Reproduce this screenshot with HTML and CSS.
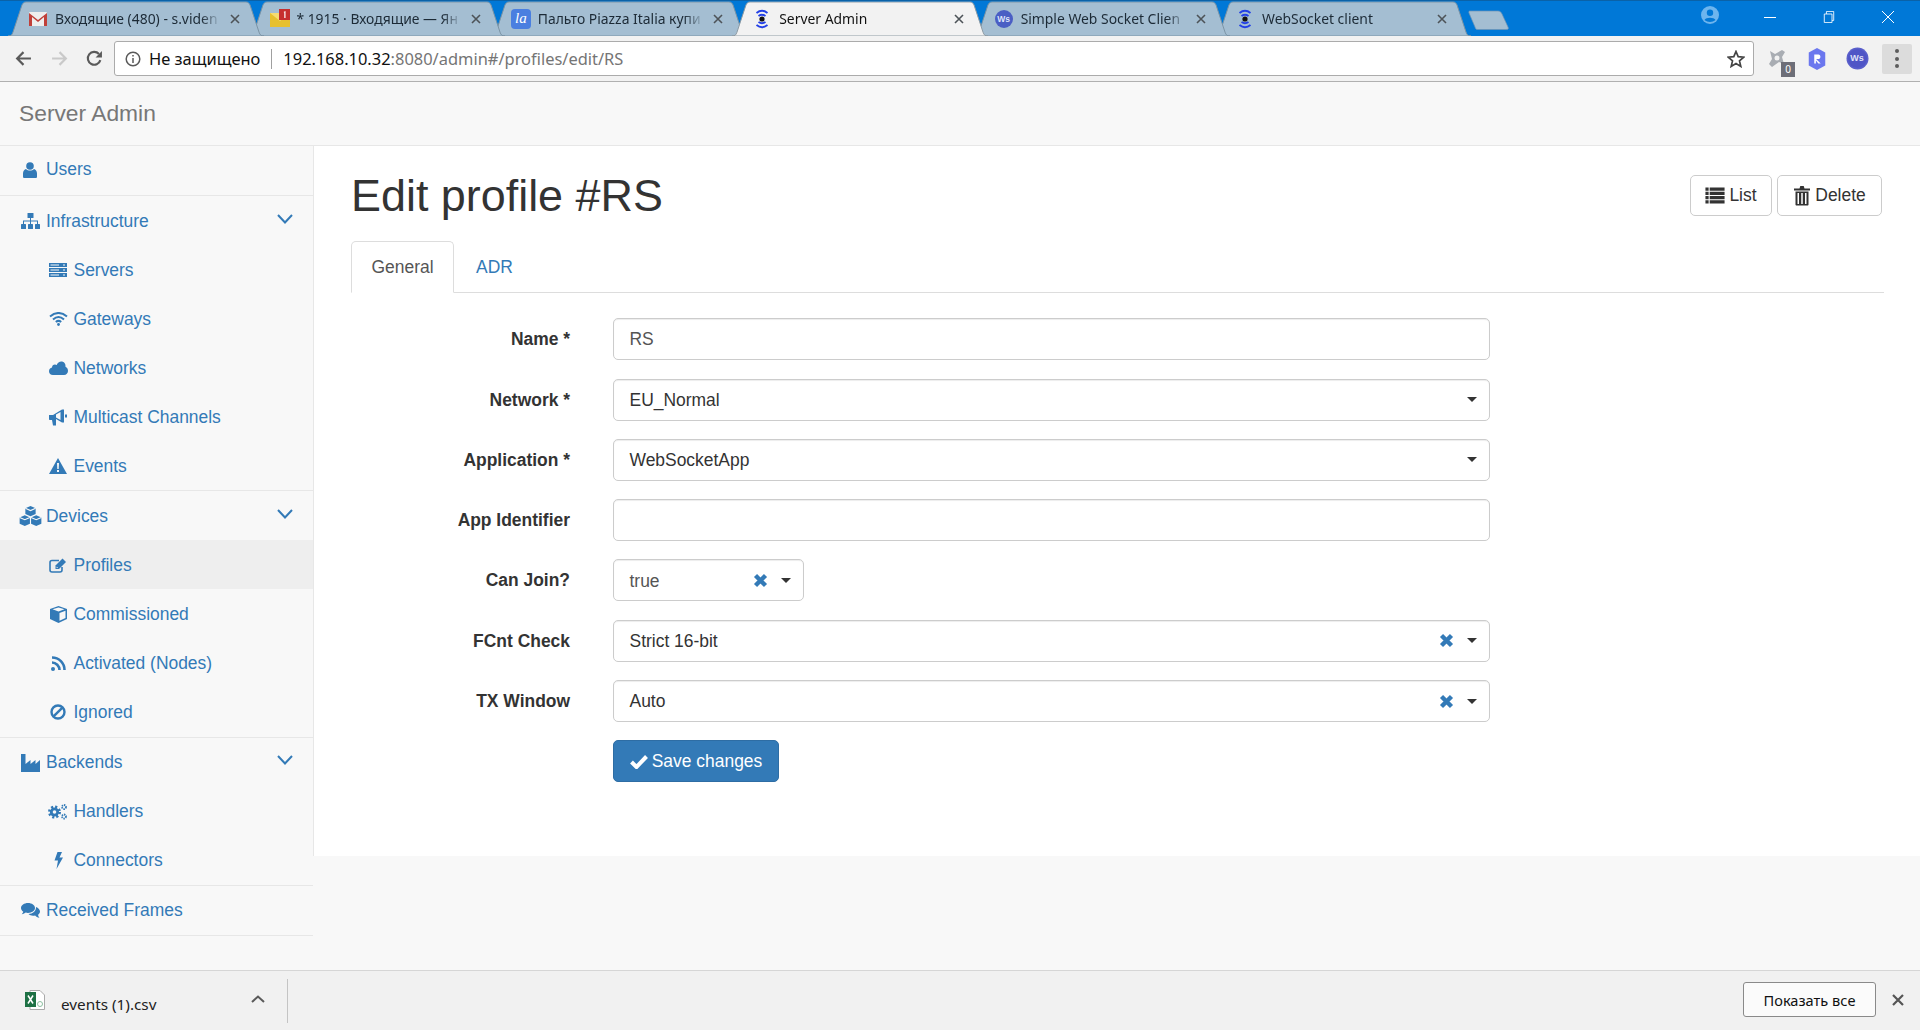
FILE: index.html
```html
<!DOCTYPE html>
<html lang="ru">
<head>
<meta charset="utf-8">
<title>Server Admin</title>
<link rel="stylesheet" href="styles.css">
</head>
<body>
<div class="tabstrip">
  <div class="tab">
    <svg class="tab-shape" viewBox="0 0 256 36" preserveAspectRatio="none"><path d="M0 36C3 36 4 35 5 32L14 4C15 2 16 1 18 1H238C240 1 241 2 242 4L251 32C252 35 253 36 256 36Z"/></svg>
    <svg class="favicon" viewBox="0 0 18 14"><rect width="18" height="14" rx="1" fill="#eee"/><path d="M0 14V1L9 8 18 1V14H15V5L9 10 3 5V14Z" fill="#c0403a"/></svg>
    <span class="tab-title">Входящие (480) - s.viden</span>
    <svg class="tab-close" viewBox="0 0 10 10"><path d="M1 1L9 9M9 1L1 9"/></svg>
  </div>
  <div class="tab">
    <svg class="tab-shape" viewBox="0 0 256 36" preserveAspectRatio="none"><path d="M0 36C3 36 4 35 5 32L14 4C15 2 16 1 18 1H238C240 1 241 2 242 4L251 32C252 35 253 36 256 36Z"/></svg>
    <svg class="favicon favicon-ya" viewBox="0 0 20 18"><path d="M0 4H20V18H0Z" fill="#e6c02f"/><path d="M0 4L10 12 20 4" fill="#f5dc72"/><rect x="9" width="11" height="11" fill="#c62f2f"/><path d="M13.500 3L15.500 2V9H14.300V3.600Z" fill="#fff"/></svg>
    <span class="tab-title">* 1915 · Входящие — Ян</span>
    <svg class="tab-close" viewBox="0 0 10 10"><path d="M1 1L9 9M9 1L1 9"/></svg>
  </div>
  <div class="tab">
    <svg class="tab-shape" viewBox="0 0 256 36" preserveAspectRatio="none"><path d="M0 36C3 36 4 35 5 32L14 4C15 2 16 1 18 1H238C240 1 241 2 242 4L251 32C252 35 253 36 256 36Z"/></svg>
    <span class="favicon-la">la</span>
    <span class="tab-title">Пальто Piazza Italia купи</span>
    <svg class="tab-close" viewBox="0 0 10 10"><path d="M1 1L9 9M9 1L1 9"/></svg>
  </div>
  <div class="tab tab-active">
    <svg class="tab-shape" viewBox="0 0 256 36" preserveAspectRatio="none"><path d="M0 36C3 36 4 35 5 32L14 4C15 2 16 1 18 1H238C240 1 241 2 242 4L251 32C252 35 253 36 256 36Z"/></svg>
    <svg class="favicon favicon-air" viewBox="0 0 16 20"><path d="M2.500 4Q8 -.5 13.500 4M4.500 7Q8 4.500 11.500 7M2.500 16Q8 20.500 13.500 16M4.500 13Q8 15.500 11.500 13"/><circle cx="8" cy="10" r="2.600"/></svg>
    <span class="tab-title">Server Admin</span>
    <svg class="tab-close" viewBox="0 0 10 10"><path d="M1 1L9 9M9 1L1 9"/></svg>
  </div>
  <div class="tab">
    <svg class="tab-shape" viewBox="0 0 256 36" preserveAspectRatio="none"><path d="M0 36C3 36 4 35 5 32L14 4C15 2 16 1 18 1H238C240 1 241 2 242 4L251 32C252 35 253 36 256 36Z"/></svg>
    <span class="favicon-ws">Ws</span>
    <span class="tab-title">Simple Web Socket Clien</span>
    <svg class="tab-close" viewBox="0 0 10 10"><path d="M1 1L9 9M9 1L1 9"/></svg>
  </div>
  <div class="tab">
    <svg class="tab-shape" viewBox="0 0 256 36" preserveAspectRatio="none"><path d="M0 36C3 36 4 35 5 32L14 4C15 2 16 1 18 1H238C240 1 241 2 242 4L251 32C252 35 253 36 256 36Z"/></svg>
    <svg class="favicon favicon-air" viewBox="0 0 16 20"><path d="M2.500 4Q8 -.5 13.500 4M4.500 7Q8 4.500 11.500 7M2.500 16Q8 20.500 13.500 16M4.500 13Q8 15.500 11.500 13"/><circle cx="8" cy="10" r="2.600"/></svg>
    <span class="tab-title">WebSocket client</span>
    <svg class="tab-close" viewBox="0 0 10 10"><path d="M1 1L9 9M9 1L1 9"/></svg>
  </div>
  <svg class="newtab" viewBox="0 0 42 20"><path d="M2 1H30C32 1 33 2 34 4L40 17C41 19 40 19.500 38 19.500H10C8 19.500 7.500 19 7 17L1 3C.5 1.500 1 1 2 1Z"/></svg>
  <div class="winctl">
    <svg class="avatar" viewBox="0 0 18 18"><circle cx="9" cy="9" r="9" fill="#6db5ee"/><circle cx="9" cy="6.800" r="3.200" fill="#0078d7"/><path d="M3.500 14C5 11 13 11 14.500 14 11.500 16.500 6.500 16.500 3.500 14Z" fill="#0078d7"/></svg>
    <svg class="winbtn" viewBox="0 0 12 12"><path d="M0 6.500H12"/></svg>
    <svg class="winbtn" viewBox="0 0 12 14"><path d="M.5 3.500H9.500V13.500H.5ZM3 3.500V.5H11.500V11H9.500"/></svg>
    <svg class="winbtn" viewBox="0 0 12 12"><path d="M0 0L12 12M12 0L0 12"/></svg>
  </div>
</div>

<div class="toolbar">
  <button class="navbtn"><svg viewBox="0 0 16 16"><path d="M15 8H2M8 2L2 8 8 14"/></svg></button>
  <button class="navbtn navbtn-off"><svg viewBox="0 0 16 16"><path d="M1 8H14M8 2L14 8 8 14"/></svg></button>
  <button class="navbtn navbtn-reload"><svg viewBox="0 0 16 16"><path d="M13.500 9.500A6 6 0 1 1 12.200 3.800"/><path class="solid" d="M15 1V7H9Z"/></svg></button>
  <div class="omnibox">
    <svg class="omni-info" viewBox="0 0 16 16"><circle cx="8" cy="8" r="6.800"/><path d="M8 7V12M8 4V5.600"/></svg>
    <span class="omni-secure">Не защищено</span>
    <span class="omni-sep"></span>
    <span class="omni-url">192.168.10.32<span class="omni-path">:8080/admin#/profiles/edit/RS</span></span>
    <svg class="omni-star" viewBox="0 0 18 18"><path d="M9 1.500L11.200 6.700 16.800 7.200 12.500 10.900 13.800 16.400 9 13.500 4.200 16.400 5.500 10.900 1.200 7.200 6.800 6.700Z"/></svg>
  </div>
  <div class="ext ext-first">
    <svg viewBox="0 0 20 20"><path d="M3 2L8 5 15 1 18 3 15 8 17 15 12 13 5 18 2 15 5 10Z" fill="#a9adb3"/><circle cx="10" cy="9" r="2.500" fill="#f2f2f2"/></svg>
    <span class="ext-badge">0</span>
  </div>
  <div class="ext">
    <svg viewBox="0 0 20 24"><path d="M10 0L19 5V19L10 24 1 19V5Z" fill="#6b77ee"/><path d="M7 7H11.500C14.500 7 14.500 12 11.500 12H9L14 17H11.500L8.800 13.500V17H7Z" fill="#fff"/></svg>
  </div>
  <div class="ext">
    <span class="ext-ws">Ws</span>
  </div>
  <div class="menu-btn"><i></i><i></i><i></i></div>
</div>

<header class="navbar"><a class="brand">Server Admin</a></header>

<div class="app">
  <nav class="sidebar">
    <a class="item group-end first"><span class="ic"><svg width="14" height="16" viewBox="0 0 14 16"><circle cx="7" cy="4" r="3.800"/><path d="M0 14.500V11.500C0 9 1.500 7.300 3 7 4 8 5.500 8.500 7 8.500S10 8 11 7C12.500 7.300 14 9 14 11.500V14.500C14 15.500 13.500 16 12.500 16H1.500C.5 16 0 15.500 0 14.500Z"/></svg></span>Users</a>

    <a class="item"><span class="ic"><svg width="19" height="16" viewBox="0 0 19 16"><rect x="6.500" width="6" height="5" rx=".5"/><rect y="11" width="5" height="5" rx=".5"/><rect x="7" y="11" width="5" height="5" rx=".5"/><rect x="14" y="11" width="5" height="5" rx=".5"/><path d="M9 5H10V7.500H17V11H16V8.500H10V11H9V8.500H3V11H2V7.500H9Z"/></svg></span>Infrastructure<svg class="chev" viewBox="0 0 16 10"><path d="M1 1L8 8.500 15 1"/></svg></a>
    <a class="item sub"><span class="ic"><svg width="18" height="14" viewBox="0 0 18 14"><path d="M0 0H18V4H0ZM0 5H18V9H0ZM0 10H18V14H0Z"/><path class="hole" d="M1.500 1.500H10V2.500H1.500ZM1.500 6.500H10V7.500H1.500ZM1.500 11.500H10V12.500H1.500ZM14 1.500H16V2.500H14ZM14 6.500H16V7.500H14ZM14 11.500H16V12.500H14Z"/></svg></span>Servers</a>
    <a class="item sub"><span class="ic"><svg class="line2" width="19" height="14" viewBox="0 0 19 14"><path d="M1 4.500Q9.500 -2.500 18 4.500M4 7.500Q9.500 2.500 15 7.500M6.800 10Q9.500 7.800 12.200 10"/><circle class="solid" cx="9.500" cy="12.500" r="1.400"/></svg></span>Gateways</a>
    <a class="item sub"><span class="ic"><svg width="19" height="14" viewBox="0 0 19 14"><path d="M4 14C1.500 14 0 12.300 0 10.200 0 8.200 1.300 6.800 3 6.500 3 4.800 4.300 3.500 6 3.500 6.600 3.500 7.200 3.700 7.700 4 8.500 1.800 10.300 .5 12.300 .5 15 .5 16.800 2.600 16.500 5.800 18 6.500 19 8 19 10 19 12.300 17.300 14 15 14Z"/></svg></span>Networks</a>
    <a class="item sub"><span class="ic"><svg width="18" height="17" viewBox="0 0 18 17"><path d="M0 6H4L13 0.500H15V13.500H13L7 10V16.500H4L3 11H1C.3 11 0 10.500 0 10Z"/><path class="hole" d="M11.500 3V11L7 8.500V5.500Z"/><rect x="16" y="5.500" width="2" height="3"/></svg></span>Multicast Channels</a>
    <a class="item sub group-end"><span class="ic"><svg width="18" height="16" viewBox="0 0 18 16"><path d="M9 0L18 16H0Z"/><path class="hole" d="M8 5H10L9.700 11H8.300ZM8 12H10V14H8Z"/></svg></span>Events</a>

    <a class="item"><span class="ic"><svg width="23" height="20" viewBox="1.500 0 20 17.500"><path d="M11.500 0L16 2V7L11.500 9 7 7V2Z"/><path d="M6.500 8L11 10V15.500L6.500 17.500 2 15.500V10ZM16.500 8L21 10V15.500L16.500 17.500 12 15.500V10Z"/><path class="hole-line" d="M7 2L11.500 4 16 2M2 10L6.500 12 11 10M12 10L16.500 12 21 10"/></svg></span>Devices<svg class="chev" viewBox="0 0 16 10"><path d="M1 1L8 8.500 15 1"/></svg></a>
    <a class="item sub active"><span class="ic"><svg width="18" height="15" viewBox="0 0 18 15"><path class="stroke" d="M10 2.500H3C1.800 2.500 1 3.300 1 4.500V12C1 13.200 1.800 14 3 14H11C12.200 14 13 13.200 13 12V9"/><path d="M6.500 7.500L13.500 .5 17 4 10 11H6.500Z"/><path class="hole" d="M7.800 8.500L9 9.700 8.300 10H7.500Z"/></svg></span>Profiles</a>
    <a class="item sub"><span class="ic"><svg width="17" height="17" viewBox="0 0 17 17"><path d="M8.500 0L17 3V13L8.500 17 0 13V3Z"/><path class="hole" d="M9.500 7L15.500 4.800V12L9.500 14.800ZM2.500 3.300L8.500 1.500 14.500 3.300 8.500 5.500Z"/></svg></span>Commissioned</a>
    <a class="item sub"><span class="ic"><svg class="line2" width="15" height="15" viewBox="0 0 15 15"><path d="M1 6.500C5 6.500 8.500 10 8.500 14M1 1.500C8 1.500 13.500 7 13.500 14" stroke-width="2.600"/><circle class="solid" cx="2" cy="13" r="2"/></svg></span>Activated (Nodes)</a>
    <a class="item sub group-end tall"><span class="ic"><svg class="line2" width="16" height="16" viewBox="0 0 16 16"><circle cx="8" cy="8" r="6.500" stroke-width="2.400"/><path d="M3.800 12.200L12.200 3.800" stroke-width="2.400"/></svg></span>Ignored</a>

    <a class="item"><span class="ic"><svg width="19" height="18" viewBox="0 0 19 18"><path d="M0 0H4.500V10L9.500 6V10L14.500 6V10L19 6V18H0Z"/></svg></span>Backends<svg class="chev" viewBox="0 0 16 10"><path d="M1 1L8 8.500 15 1"/></svg></a>
    <a class="item sub"><span class="ic"><svg class="cogs" width="20" height="17" viewBox="0 0 20 17"><circle class="cog-t" cx="6.500" cy="9" r="5" /><circle class="solid" cx="6.500" cy="9" r="4.600"/><circle class="hole" cx="6.500" cy="9" r="1.800"/><circle class="cog-s" cx="16" cy="4" r="2"/><circle class="cog-s" cx="16" cy="13.500" r="2"/></svg></span>Handlers</a>
    <a class="item sub group-end"><span class="ic"><svg width="9" height="17" viewBox="0 0 9 17"><path d="M3.500 0H8L5.500 5.500H9L2.500 17 4 8.500H.5Z"/></svg></span>Connectors</a>

    <a class="item group-end"><span class="ic"><svg width="19" height="15" viewBox="0 0 19 15"><path d="M7 0C3.200 0 0 2.200 0 5 0 6.500 .9 7.800 2.300 8.700 2 9.700 1.500 10.500 .8 11.200 2.500 11 3.800 10.400 4.700 9.600 5.400 9.800 6.200 9.900 7 9.900 10.900 9.900 14 7.700 14 5S10.900 0 7 0Z"/><path d="M15 4C15.300 8 11.700 10.800 7.500 11 8.600 12.200 10.300 12.700 12 12.700 12.700 12.700 13.400 12.600 14.100 12.400 15 13.300 16.500 14.500 18.500 14.700 17.700 14 17.200 13 17 11.800 18.200 11 19 9.800 19 8.500 19 6.700 17.400 5 15 4Z"/></svg></span>Received Frames</a>
  </nav>

  <main class="main">
    <div class="page-head">
      <h1>Edit profile #RS</h1>
      <div class="head-btns">
        <a class="btn btn-list"><svg class="btn-ic" width="20" height="17" viewBox="0 0 18 16"><path d="M0 .5H3V3.500H0ZM0 4.500H3V7.500H0ZM0 8.500H3V11.500H0ZM0 12.500H3V15.500H0Z"/><path d="M4 .5H18V3.500H4ZM4 4.500H18V7.500H4ZM4 8.500H18V11.500H4ZM4 12.500H18V15.500H4Z"/></svg> List</a>
        <a class="btn btn-del"><svg class="btn-ic" width="16" height="21" viewBox="0 0 16 20"><path d="M0 3H5.500L6.300 .5H9.700L10.500 3H16V5H0Z"/><path d="M1.500 6H14.500V19C14.500 19.600 14 20 13.500 20H2.500C2 20 1.500 19.600 1.500 19Z"/><path class="hole" d="M3.500 7.500H5V18.500H3.500ZM7.250 7.500H8.750V18.500H7.250ZM11 7.500H12.500V18.500H11Z"/></svg> Delete</a>
      </div>
    </div>

    <ul class="nav-tabs">
      <li class="nav-active"><a>General</a></li>
      <li><a class="nav-link">ADR</a></li>
    </ul>

    <form class="form">
      <div class="form-row"><label>Name *</label><input class="control" type="text" value="RS"></div>
      <div class="form-row"><label>Network *</label>
        <div class="control select"><span class="select-val">EU_Normal</span><span class="caret"></span></div></div>
      <div class="form-row"><label>Application *</label>
        <div class="control select"><span class="select-val">WebSocketApp</span><span class="caret"></span></div></div>
      <div class="form-row"><label>App Identifier</label><input class="control" type="text" value=""></div>
      <div class="form-row"><label>Can Join?</label>
        <div class="control select select-short"><span class="select-val select-muted">true</span><svg class="clear" viewBox="0 0 12 12"><path d="M2 2L10 10M10 2L2 10"/></svg><span class="caret"></span></div></div>
      <div class="form-row"><label>FCnt Check</label>
        <div class="control select"><span class="select-val">Strict 16-bit</span><svg class="clear" viewBox="0 0 12 12"><path d="M2 2L10 10M10 2L2 10"/></svg><span class="caret"></span></div></div>
      <div class="form-row"><label>TX Window</label>
        <div class="control select"><span class="select-val">Auto</span><svg class="clear" viewBox="0 0 12 12"><path d="M2 2L10 10M10 2L2 10"/></svg><span class="caret"></span></div></div>
      <div class="form-row"><span class="label-gap"></span>
        <button class="btn-primary" type="button"><svg class="check" width="18" height="15" viewBox="0 0 18 15"><path d="M1.500 8L6.500 13 16.500 2.500"/></svg> Save changes</button></div>
    </form>
  </main>
</div>

<footer class="downloads">
  <svg class="dl-file" viewBox="0 0 20 20"><path d="M5 .5H15L19.500 5V19.500H5Z" fill="#fff" stroke="#aaa"/><rect y="2" width="11" height="15" fill="#1e7145"/><path d="M3 5.500L8 13.500M8 5.500L3 13.500" stroke="#fff" stroke-width="1.500"/><circle cx="15" cy="14" r="2.500" fill="none" stroke="#8cc0a0"/></svg>
  <span class="dl-name">events (1).csv</span>
  <svg class="dl-chev" viewBox="0 0 14 8"><path d="M1 7L7 1.500 13 7"/></svg>
  <span class="dl-sep"></span>
  <span class="dl-spacer"></span>
  <button class="dl-show">Показать все</button>
  <svg class="dl-close" viewBox="0 0 12 12"><path d="M1 1L11 11M11 1L1 11"/></svg>
</footer>
</body>
</html>
```

FILE: styles.css
```css
* { box-sizing: border-box; }
html, body { margin: 0; padding: 0; }
body {
  width: 1920px; height: 1030px; overflow: hidden;
  display: flex; flex-direction: column;
  background: #f8f8f8; color: #333;
  font-family: "Liberation Sans", Arial, sans-serif; font-size: 17.45px;
}

/* browser tab strip */
.tabstrip {
  height: 36px; flex: none; display: flex; align-items: stretch;
  background: #0078d7; border-top: 1px solid #0a62a8; padding-left: 8px;
  margin-bottom: 0; position: relative;
}
.tab {
  width: 256px; margin-right: -14.6px; height: 35px; flex: none; position: relative;
  display: flex; align-items: center; padding-left: 21px;
  font-family: "Noto Sans", sans-serif; font-size: 13.9px; color: #1c2a36;
}
.tab:nth-child(1) { z-index: 6; }
.tab:nth-child(2) { z-index: 5; }
.tab:nth-child(3) { z-index: 4; }
.tab:nth-child(5) { z-index: 3; }
.tab:nth-child(6) { z-index: 2; }
.tab-active { z-index: 7; color: #111; }
.tab-shape { position: absolute; left: 0; top: 0; width: 100%; height: 100%; }
.tab-shape path { fill: #a4bed2; stroke: #7b93a5; stroke-width: 1; }
.tab-active .tab-shape path { fill: #f2f2f2; stroke: #8d9aa4; }
.favicon { position: relative; width: 18px; height: 14px; flex: none; margin-right: 8px; }
.favicon-ya { width: 20px; height: 18px; margin-right: 6px; margin-top: -2px; }
.favicon-air { width: 18px; height: 20px; fill: none; stroke: #2340e6; stroke-width: 1.8; }
.favicon-air circle { fill: #111; stroke: none; }
.favicon-la {
  position: relative; width: 20px; height: 20px; margin-left: -1px; margin-right: 7px; flex: none;
  background: #4a7fe0; border-radius: 4px; color: #fff; text-align: center;
  font: italic 15px/19px "Liberation Serif", serif;
}
.favicon-ws {
  position: relative; width: 18px; height: 18px; margin-right: 8px; flex: none;
  background: #4a5ec4; border-radius: 50%; color: #dfe4fa; text-align: center;
  font: bold 8.5px/18px "Liberation Sans", sans-serif;
}
.tab-title {
  position: relative; width: 166px; flex: none; overflow: hidden; white-space: nowrap; line-height: 20px;
  -webkit-mask-image: linear-gradient(to right, #000 88%, transparent);
  mask-image: linear-gradient(to right, #000 88%, transparent);
}
.tab-close { position: relative; width: 10px; height: 10px; flex: none; margin-left: 9px; fill: none; stroke: #4d5358; stroke-width: 1.6; }
.newtab { width: 42px; height: 20px; margin-top: 9px; margin-left: 12px; flex: none; position: relative; z-index: 1; }
.newtab path { fill: #a4bed2; stroke: #6f93b5; stroke-width: .7; }
.winctl { position: absolute; right: 0; top: 0; height: 35px; display: flex; padding-right: 26px; }
.avatar { width: 18px; height: 18px; margin: 5px 0 0; }
.winbtn { width: 12px; height: 12px; margin: 10px 0 0 45px; fill: none; stroke: #fff; stroke-width: 1; }
.winbtn:nth-child(3) { margin-left: 47px; }
.winbtn:last-child { margin-left: 47px; }

/* browser toolbar */
.toolbar {
  height: 46px; flex: none; display: flex; align-items: center;
  background: #f2f2f2; border-bottom: 1px solid #b0b0b0; padding: 0 0 0 5px;
}
.navbtn { width: 36px; height: 30px; padding: 0; border: 0; background: none; display: flex; align-items: center; justify-content: center; }
.navbtn svg { width: 17px; height: 17px; fill: none; stroke: #5a5a5a; stroke-width: 2; }
.navbtn .solid { fill: #5a5a5a; stroke: none; }
.navbtn-off svg { stroke: #c9c9c9; }
.navbtn-reload { width: 34px; }
.omnibox {
  width: 1640px; height: 35px; margin-left: 3px; flex: none;
  background: #fff; border: 1px solid #ababab; border-radius: 3px;
  display: flex; align-items: center; padding: 0 0 0 10px;
  font-family: "Noto Sans", sans-serif; font-size: 16.45px; white-space: nowrap;
}
.omni-info { width: 16px; height: 16px; fill: none; stroke: #5a5a5a; stroke-width: 1.5; flex: none; }
.omni-secure { margin-left: 8px; color: #111; }
.omni-sep { width: 1px; height: 20px; background: #a0a0a0; margin: 0 11px 0 11px; }
.omni-url { color: #111; flex: 1; }
.omni-path { color: #757575; }
.omni-star { width: 18px; height: 18px; margin-right: 8px; fill: none; stroke: #444; stroke-width: 1.7; flex: none; }
.ext { width: 40px; height: 30px; position: relative; display: flex; align-items: center; justify-content: center; flex: none; }
.ext svg { width: 20px; height: 22px; }
.ext-first { margin-left: 3px; }
.ext-badge {
  position: absolute; left: 24px; top: 18px; width: 14px; height: 15px; background: #6d6e78; color: #fff;
  font-size: 10px; line-height: 15px; text-align: center; font-family: "Noto Sans", sans-serif;
}
.ext-ws {
  width: 19px; height: 19px; border-radius: 50%; background: #4f55c6; color: #dfe1f7; text-align: center;
  font: bold 9px/19px "Liberation Sans", sans-serif; box-shadow: 0 0 0 1.5px #5a5fcb;
}
.menu-btn {
  width: 30px; height: 30px; margin-left: 5px; background: #dcdcdc; border-radius: 2px; flex: none;
  display: flex; flex-direction: column; align-items: center; justify-content: center; gap: 3.500px;
}
.menu-btn i { width: 4px; height: 4px; border-radius: 50%; background: #5c5c5c; }

/* app */
.navbar { height: 64px; flex: none; background: #f8f8f8; border-bottom: 1px solid #e7e7e7; display: flex; align-items: center; padding-left: 19px; }
.brand { font-size: 22.8px; color: #777; }
.app { flex: 1; display: flex; align-items: flex-start; }
.sidebar { width: 313px; flex: none; }
.item { height: 49px; display: flex; align-items: center; padding: 1px 0 0 18px; color: #337ab7; position: relative; }
.item.group-end { height: 50px; border-bottom: 1px solid #e7e7e7; }
.item.first { padding-top: 0; padding-bottom: 2px; }
.item.tall { height: 51px; padding-bottom: 1px; }
.item.sub { padding-left: 46px; }
.item.tall ~ .item { padding-top: 0; }
.item.tall ~ .item .chev { top: 17px; }
.active { background: #eee; }
.ic { width: 24px; margin-right: 4px; display: flex; align-items: center; justify-content: center; flex: none; }
.sub .ic { margin-right: 3.500px; }
.ic svg { fill: #337ab7; display: block; }
.ic .hole { fill: #f8f8f8; }
.active .ic .hole { fill: #eee; }
.ic .stroke { fill: none; stroke: #337ab7; stroke-width: 1.600; }
.ic .hole-line { fill: none; stroke: #f8f8f8; stroke-width: 1; }
.ic .line2 { fill: none; stroke: #337ab7; stroke-width: 2; }
.ic .line2 .solid { fill: #337ab7; stroke: none; }
.cog-t { fill: none; stroke: #337ab7; stroke-width: 3; stroke-dasharray: 2 1.930; }
.cog-s { fill: none; stroke: #337ab7; stroke-width: 1.800; stroke-dasharray: 1.300 .800; }
.chev { width: 16px; height: 10px; position: absolute; left: 277px; top: 18px; fill: none; stroke: #337ab7; stroke-width: 2; }

.main {
  flex: 1; height: 710px; background: #fff; border-left: 1px solid #e7e7e7;
  padding: 0 36px 0 37px;
}
.page-head { height: 95px; display: flex; justify-content: space-between; align-items: flex-start; }
h1 { margin: 25px 0 0; font-size: 44.9px; line-height: 50px; font-weight: 400; color: #333; }
.head-btns { display: flex; gap: 5px; margin-top: 29px; padding-right: 2px; }
.btn {
  height: 41px; border: 1px solid #ccc; border-radius: 5px; background: #fff; color: #333;
  display: flex; align-items: center; justify-content: center; gap: 4px;
}
.btn-list { width: 82px; }
.btn-del { width: 105px; gap: 5px; padding-left: 1px; }
.btn-ic { fill: #333; flex: none; }
.btn-ic .hole { fill: #fff; }

.nav-tabs { list-style: none; margin: 0; padding: 0; height: 52px; display: flex; border-bottom: 1px solid #ddd; }
.nav-tabs li { height: 52px; }
.nav-tabs a { display: block; height: 52px; padding: 0 21px; line-height: 52px; }
.nav-active a { width: 103px; border: 1px solid #ddd; border-bottom-color: #fff; border-radius: 5px 5px 0 0; background: #fff; color: #555; padding: 0 19.500px; line-height: 50px; }
.nav-link { color: #337ab7; margin-left: 1px; }

.form { margin-top: 25.3px; }
.form-row { height: 60.3px; display: flex; align-items: flex-start; }
.form-row label, .label-gap { width: 219px; flex: none; margin-right: 43px; text-align: right; font-weight: 700; line-height: 42px; }
.control {
  width: 877px; height: 42px; border: 1px solid #ccc; border-radius: 5px; background: #fff; padding: 0 15.500px;
  font: inherit; color: #555; box-shadow: inset 0 1px 1px rgba(0,0,0,.075); outline: 0;
}
.select { display: flex; align-items: center; color: #333; position: relative; }
.select-short { width: 191px; }
.select-val { flex: 1; padding-top: 1px; }
.select-short .select-val { padding-top: 2px; }
.select-muted { color: #555; }
.clear { width: 15px; height: 15px; flex: none; fill: none; stroke: #337ab7; stroke-width: 3.500; margin-right: 13.500px; }
.caret { width: 0; height: 0; flex: none; margin-right: -3.500px; border-left: 5px solid transparent; border-right: 5px solid transparent; border-top: 5px solid #333; }
.btn-primary {
  width: 166px; height: 42px; padding: 0; border: 1px solid #2e6da4; border-radius: 5px; background: #337ab7; color: #fff;
  font: inherit; display: flex; align-items: center; justify-content: center; gap: 4px;
}
.check { fill: none; stroke: #fff; stroke-width: 4; }

/* download bar */
.downloads {
  height: 60px; flex: none; margin-top: auto; background: #f1f1f1; border-top: 1px solid #d6d6d6;
  display: flex; align-items: center; padding-left: 25px;
  font-family: "Noto Sans", sans-serif; font-size: 15.3px; color: #222;
}
.dl-file { width: 20px; height: 20px; flex: none; margin-bottom: 1px; }
.dl-name { margin-left: 16px; width: 180px; margin-top: 6px; flex: none; }
.dl-chev { width: 14px; height: 8px; margin-left: 10px; margin-bottom: 4px; fill: none; stroke: #5a5a5a; stroke-width: 2; flex: none; }
.dl-sep { width: 1px; height: 44px; background: #c4c4c4; margin-left: 22px; flex: none; }
.dl-spacer { flex: 1; }
.dl-show {
  width: 133px; height: 35px; margin-bottom: 2px; border: 1px solid #8a8a8a; border-radius: 3px; background: #fbfbfb; color: #111;
  font: inherit; font-size: 14.6px; padding: 0;
}
.dl-close { width: 12px; height: 12px; margin: 0 16px 1px 16px; fill: none; stroke: #555; stroke-width: 2.200; flex: none; }
```
